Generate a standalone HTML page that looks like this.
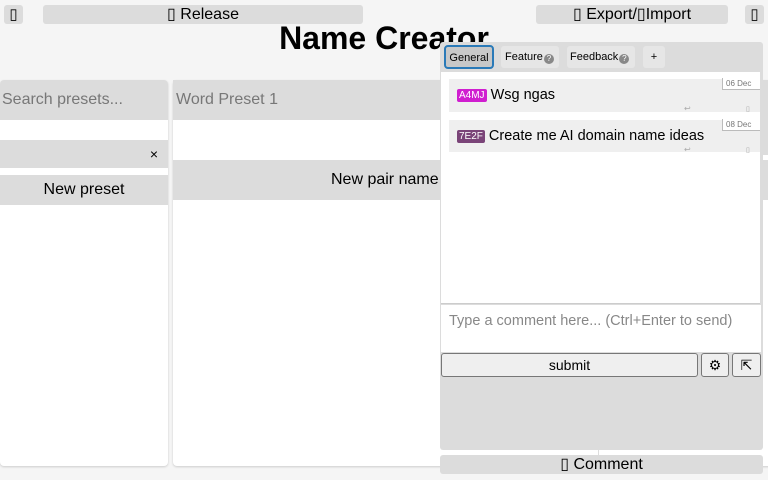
<!DOCTYPE html>
<html><head><style>
*{box-sizing:border-box;margin:0;padding:0}
body{width:768px;height:480px;background:#f5f5f5;font-family:"Liberation Sans",sans-serif;position:relative;overflow:hidden}
.a{position:absolute}
.g{background:#dcdcdc}
.q{display:inline-block;width:10px;height:10px;border-radius:5px;background:#888;color:#fff;font-size:8px;text-align:center;line-height:10px;vertical-align:-1px;margin-left:1px}
</style></head><body>
<div class="a g" style="left:4px;top:5px;width:19px;height:19px;border-radius:3px;font-size:15px;text-align:center;line-height:19px">▯</div>
<div class="a g" style="left:43px;top:5px;width:320px;height:19px;border-radius:3px;font-size:16px;text-align:center;line-height:19px">▯ Release</div>
<div class="a g" style="left:536px;top:5px;width:192px;height:19px;border-radius:3px;font-size:16px;text-align:center;line-height:19px">▯ Export/▯Import</div>
<div class="a g" style="left:745px;top:5px;width:19px;height:19px;border-radius:3px;font-size:15px;text-align:center;line-height:19px">▯</div>
<div class="a" style="left:0;width:768px;top:20px;text-align:center;font-size:32px;font-weight:bold">Name Creator</div>

<div class="a" style="left:0;top:80px;width:168px;height:386px;background:#fff;border-radius:4px;box-shadow:0 1px 2px #ccc"></div>
<div class="a g" style="left:0;top:80px;width:168px;height:40px;border-radius:4px 4px 0 0;font-size:16px;color:#777;padding:11px 2px">Search presets...</div>
<div class="a g" style="left:0;top:140px;width:168px;height:28px;font-size:14px;text-align:right;padding:6px 10px">×</div>
<div class="a g" style="left:0;top:175px;width:168px;height:30px;font-size:16px;text-align:center;line-height:30px">New preset</div>

<div class="a" style="left:173px;top:80px;width:600px;height:386px;background:#fff;border-radius:4px;box-shadow:0 1px 2px #ccc"></div>
<div class="a g" style="left:173px;top:80px;width:600px;height:40px;font-size:16px;color:#777;padding:11px 3px">Word Preset 1</div>
<div class="a g" style="left:173px;top:160px;width:600px;height:40px;font-size:16px;padding:11px 158px">New pair name</div>
<div class="a g" style="left:760px;top:120px;width:8px;height:35px"></div>
<div class="a" style="left:598px;top:440px;width:1px;height:26px;background:#ddd"></div>

<div class="a g" style="left:440px;top:42px;width:323px;height:408px;border-radius:3px"></div>
<div class="a" style="left:444px;top:45px;width:50px;height:24px;background:#c8c8c8;border:2px solid #2a7ab8;border-radius:4px;font-size:11px;text-align:center;line-height:22px">General</div>
<div class="a" style="left:501px;top:46px;width:58px;height:22px;background:#e6e6e6;border-radius:3px;font-size:11px;line-height:22px;padding-left:4px">Feature<span class="q">?</span></div>
<div class="a" style="left:567px;top:46px;width:68px;height:22px;background:#e6e6e6;border-radius:3px;font-size:11px;line-height:22px;padding-left:3px">Feedback<span class="q">?</span></div>
<div class="a" style="left:643px;top:46px;width:22px;height:22px;background:#e6e6e6;border-radius:3px;font-size:11px;text-align:center;line-height:22px">+</div>
<div class="a" style="left:441px;top:72px;width:319px;height:232px;background:#fff;border-bottom:1px solid #ccc"></div>
<div class="a" style="left:449px;top:79px;width:311px;height:33px;background:#efefef"></div>
<div class="a" style="left:722px;top:78px;width:38px;height:12px;border-left:1px solid #bbb;border-bottom:1px solid #bbb;font-size:8px;color:#777;padding-left:3px;line-height:12px;background:#fff">06 Dec</div>
<div class="a" style="left:457px;top:87px;font-size:14.5px"><span style="background:#d01ed0;color:#fff;font-size:10px;padding:1px 2px;border-radius:2px;vertical-align:1px">A4MJ</span> Wsg ngas</div>
<div class="a" style="left:684px;top:104px;font-size:8px;color:#aaa">↩</div>
<div class="a" style="left:746px;top:105px;font-size:7px;color:#aaa">▯</div>
<div class="a" style="left:449px;top:120px;width:311px;height:32px;background:#efefef"></div>
<div class="a" style="left:722px;top:119px;width:38px;height:12px;border-left:1px solid #bbb;border-bottom:1px solid #bbb;font-size:8px;color:#777;padding-left:3px;line-height:12px;background:#fff">08 Dec</div>
<div class="a" style="left:457px;top:128px;font-size:14.5px"><span style="background:#7a4478;color:#fff;font-size:10px;padding:1px 2px;border-radius:2px;vertical-align:1px">7E2F</span> Create me AI domain name ideas</div>
<div class="a" style="left:684px;top:145px;font-size:8px;color:#aaa">↩</div>
<div class="a" style="left:746px;top:146px;font-size:7px;color:#aaa">▯</div>
<div class="a" style="left:441px;top:305px;width:320px;height:47px;background:#fff;font-size:14.5px;color:#888;padding:8px 8px">Type a comment here... (Ctrl+Enter to send)</div>
<div class="a" style="left:441px;top:353px;width:257px;height:24px;background:#efefef;border:1px solid #777;border-radius:3px;font-size:14px;text-align:center;line-height:22px">submit</div>
<div class="a" style="left:701px;top:353px;width:28px;height:24px;background:#efefef;border:1px solid #777;border-radius:3px;font-size:14px;text-align:center;line-height:22px">⚙</div>
<div class="a" style="left:732px;top:353px;width:29px;height:24px;background:#efefef;border:1px solid #777;border-radius:3px;font-size:14px;text-align:center;line-height:22px">⇱</div>
<div class="a g" style="left:440px;top:455px;width:323px;height:19px;border-radius:3px;font-size:16px;text-align:center;line-height:19px">▯ Comment</div>
</body></html>
